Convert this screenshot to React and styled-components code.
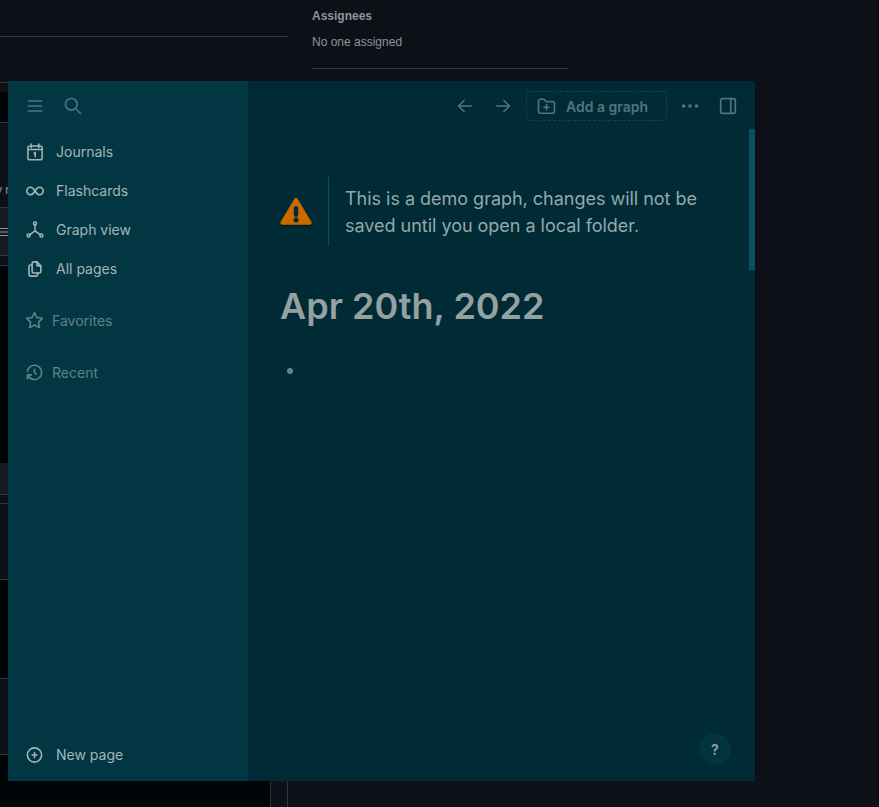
import React from "react";
import styled, { createGlobalStyle } from "styled-components";
import {
  TbMenu2,
  TbSearch,
  TbFiles,
  TbStar,
  TbHistory,
  TbCirclePlus,
  TbArrowLeft,
  TbArrowRight,
  TbDots,
  TbLayoutSidebarRight,
} from "react-icons/tb";

const GlobalStyle = createGlobalStyle`
  html, body {
    margin: 0;
    height: 100%;
    background: #0d1117;
    overflow: hidden;
  }
  body {
    font-family: Inter, "Liberation Sans", sans-serif;
  }
`;

function JournalIcon() {
  return (
    <svg width="18" height="18" viewBox="0 0 18 18" fill="none" stroke="currentColor" strokeWidth="1.5" strokeLinecap="round" strokeLinejoin="round">
      <rect x="1.9" y="2.9" width="14.2" height="13.8" rx="1.8" />
      <path d="M5.2 1v3.4M12.8 1v3.4M1.9 6.6h14.2" />
      <path d="M8.2 10.2l1-.8v4.4" />
    </svg>
  );
}

function InfinityIcon() {
  return (
    <svg width="18" height="10" viewBox="0 0 18 10" fill="none" stroke="currentColor" strokeWidth="1.6" strokeLinecap="round" strokeLinejoin="round">
      <path d="M9 5C7.6 2.8 6.4 1.2 4.6 1.2a3.8 3.8 0 0 0 0 7.6C6.4 8.8 7.6 7.2 9 5c1.4-2.2 2.6-3.8 4.4-3.8a3.8 3.8 0 0 1 0 7.6C11.6 8.8 10.4 7.2 9 5z" />
    </svg>
  );
}

function GraphIcon() {
  return (
    <svg width="18" height="18" viewBox="0 0 18 18" fill="none" stroke="currentColor" strokeWidth="1.5" strokeLinecap="round">
      <circle cx="9" cy="2.6" r="1.5" />
      <circle cx="2.6" cy="14.6" r="1.5" />
      <circle cx="15.4" cy="14.6" r="1.5" />
      <path d="M9 4.2v5.6M9 9.8l-5.2 3.9M9 9.8l5.2 3.9" />
    </svg>
  );
}

function FolderPlusIcon() {
  return (
    <svg width="19" height="17" viewBox="0 0 19 17" fill="none" stroke="currentColor" strokeWidth="1.6" strokeLinecap="round" strokeLinejoin="round">
      <path d="M1.5 3.2a2 2 0 0 1 2-2h3.4l2.3 2.4h6.3a2 2 0 0 1 2 2v7.6a2 2 0 0 1-2 2H3.5a2 2 0 0 1-2-2z" />
      <path d="M9.5 6.6v5.2M6.9 9.2h5.2" />
    </svg>
  );
}

function WarningIcon() {
  return (
    <svg width="32" height="30" viewBox="0 0 32 30">
      <path d="M16 3L29.6 25.8H2.4z" fill="#c96a00" stroke="#c96a00" strokeWidth="4" strokeLinejoin="round" />
      <rect x="13.8" y="9" width="4.4" height="11" rx="2" fill="#002b36" />
      <circle cx="16" cy="23" r="2.5" fill="#002b36" />
    </svg>
  );
}

const backdropRows = [
  { height: 37, tone: "#0d1117", line: true },
  { height: 46, tone: "#0d1117", line: true },
  { height: 9, tone: "#0d1117" },
  { height: 31, tone: "#010409", line: true },
  { height: 85, tone: "#0d1117", line: true, text: "y r" },
  { height: 48, tone: "#161b22", line: true, glyph: true },
  { height: 10, tone: "#0d1117", line: true },
  { height: 197, tone: "#010409" },
  { height: 32, tone: "#161b22", line: true },
  { height: 9, tone: "#0d1117", line: true },
  { height: 76, tone: "#0d1117", line: true },
  { height: 99, tone: "#010409", line: true },
  { height: 76, tone: "#0d1117", line: true },
];

const mainNav = [
  { label: "Journals", icon: <JournalIcon /> },
  { label: "Flashcards", icon: <InfinityIcon /> },
  { label: "Graph view", icon: <GraphIcon /> },
  { label: "All pages", icon: <TbFiles size={20} /> },
];

export default function App() {
  return (
    <>
      <GlobalStyle />
      <Backdrop>
        <LeftColumn>
          {backdropRows.map((row, i) => (
            <BackdropRow key={i} $height={row.height} $tone={row.tone} $line={row.line}>
              {row.text && <ClippedText>{row.text}</ClippedText>}
              {row.glyph && <ClippedGlyph><TbMenu2 size={14} /></ClippedGlyph>}
            </BackdropRow>
          ))}
          <BottomRail>
            <BottomPanel />
            <BottomGutter />
          </BottomRail>
        </LeftColumn>
        <RightColumn>
          <SideHeading>Assignees</SideHeading>
          <SideText>No one assigned</SideText>
          <SideRule />
        </RightColumn>
      </Backdrop>

      <DemoWindow>
        <Sidebar>
          <SidebarTop>
            <DimIcon><TbMenu2 size={20} /></DimIcon>
            <DimIcon><TbSearch size={20} /></DimIcon>
          </SidebarTop>
          <NavList>
            {mainNav.map((item) => (
              <NavItem key={item.label}>
                <NavIcon>{item.icon}</NavIcon>
                {item.label}
              </NavItem>
            ))}
          </NavList>
          <SectionItem $top={22}>
            <TbStar size={19} />
            Favorites
          </SectionItem>
          <SectionItem $top={32}>
            <TbHistory size={19} />
            Recent
          </SectionItem>
          <NewPage>
            <NavIcon><TbCirclePlus size={20} /></NavIcon>
            New page
          </NewPage>
        </Sidebar>

        <Main>
          <Toolbar>
            <ToolButton><TbArrowLeft size={22} strokeWidth={1.7} /></ToolButton>
            <ToolButton><TbArrowRight size={22} strokeWidth={1.7} /></ToolButton>
            <AddGraph>
              <FolderPlusIcon />
              Add a graph
            </AddGraph>
            <ToolButton><TbDots size={22} /></ToolButton>
            <ToolButton><TbLayoutSidebarRight size={22} strokeWidth={1.8} /></ToolButton>
          </Toolbar>
          <Scrollbar />
          <Content>
            <Notice>
              <WarningBox><WarningIcon /></WarningBox>
              <NoticeText>
                This is a demo graph, changes will not be saved until you open a local folder.
              </NoticeText>
            </Notice>
            <PageTitle>Apr 20th, 2022</PageTitle>
            <Bullet />
          </Content>
          <HelpButton>?</HelpButton>
        </Main>
      </DemoWindow>
    </>
  );
}

const Backdrop = styled.div`
  display: flex;
  height: 807px;
  overflow: hidden;
`;

const LeftColumn = styled.div`
  width: 288px;
  flex-shrink: 0;
  display: flex;
  flex-direction: column;
`;

const BackdropRow = styled.div`
  box-sizing: border-box;
  height: ${(props) => props.$height}px;
  flex-shrink: 0;
  display: flex;
  align-items: center;
  overflow: hidden;
  background: ${(props) => props.$tone};
  border-bottom: ${(props) => (props.$line ? "1px solid #30363d" : "none")};
`;

const ClippedText = styled.span`
  margin: 50px 0 0 -4px;
  font-family: "Liberation Sans", Arial, sans-serif;
  font-size: 12px;
  white-space: nowrap;
  color: #8b949e;
`;

const ClippedGlyph = styled.span`
  display: flex;
  margin: 0 0 0 -3px;
  color: #8b949e;
`;

const BottomRail = styled.div`
  flex: 1;
  display: flex;
`;

const BottomPanel = styled.div`
  width: 271px;
  box-sizing: border-box;
  background: #010409;
  border-right: 1px solid #30363d;
`;

const BottomGutter = styled.div`
  width: 17px;
  box-sizing: border-box;
  border-right: 1px solid #30363d;
`;

const RightColumn = styled.div`
  width: 256px;
  margin-left: 24px;
  padding-top: 9px;
`;

const SideHeading = styled.div`
  font-family: "Liberation Sans", Arial, sans-serif;
  font-size: 12px;
  font-weight: 700;
  line-height: 14px;
  color: #8b949e;
`;

const SideText = styled.div`
  font-family: "Liberation Sans", Arial, sans-serif;
  font-size: 12px;
  line-height: 14px;
  margin-top: 12px;
  color: #8b949e;
`;

const SideRule = styled.div`
  height: 1px;
  margin-top: 19px;
  background: #30363d;
`;

const DemoWindow = styled.div`
  position: absolute;
  left: 8px;
  top: 81px;
  width: 747px;
  height: 700px;
  display: flex;
  overflow: hidden;
`;

const Sidebar = styled.aside`
  width: 240px;
  flex-shrink: 0;
  display: flex;
  flex-direction: column;
  background: #023643;
  color: #a4b5b6;
`;

const SidebarTop = styled.div`
  height: 51px;
  padding-left: 17px;
  display: flex;
  align-items: center;
  gap: 18px;
  margin-top: -1px;
`;

const DimIcon = styled.span`
  display: flex;
  color: #4a7680;
`;

const NavList = styled.nav`
  display: flex;
  flex-direction: column;
  margin-top: 1px;
`;

const NavItem = styled.div`
  height: 39px;
  padding-left: 17px;
  display: flex;
  align-items: center;
  gap: 12px;
  font-size: 14px;
  color: #a4b5b6;
`;

const NavIcon = styled.span`
  width: 19px;
  display: flex;
  align-items: center;
  justify-content: center;
`;

const SectionItem = styled.div`
  height: 20px;
  margin-top: ${(props) => props.$top}px;
  padding-left: 17px;
  display: flex;
  align-items: center;
  gap: 8px;
  font-size: 14px;
  color: #5f8288;
`;

const NewPage = styled(NavItem)`
  margin-top: auto;
  margin-bottom: 7px;
`;

const Main = styled.main`
  position: relative;
  flex: 1;
  min-width: 0;
  background: #002b36;
  display: flex;
  flex-direction: column;
`;

const Toolbar = styled.header`
  height: 50px;
  padding-right: 8px;
  display: flex;
  align-items: center;
  justify-content: flex-end;
  color: #4f757c;
`;

const ToolButton = styled.span`
  width: 38px;
  height: 30px;
  display: flex;
  align-items: center;
  justify-content: center;
`;

const AddGraph = styled.div`
  width: 141px;
  height: 30px;
  margin: 0 4px;
  box-sizing: border-box;
  padding-left: 10px;
  display: flex;
  align-items: center;
  gap: 10px;
  border: 1px dashed #0e4552;
  border-radius: 4px;
  font-size: 14px;
  font-weight: 600;
  color: #4f757c;
`;

const Scrollbar = styled.div`
  position: absolute;
  right: 0;
  top: 48px;
  width: 6px;
  height: 141px;
  background: #0d4f60;
`;

const Content = styled.div`
  padding: 46px 0 0 32px;
  display: flex;
  flex-direction: column;
  align-items: flex-start;
`;

const Notice = styled.div`
  display: flex;
  align-items: center;
`;

const WarningBox = styled.span`
  width: 48px;
  display: flex;
  filter: drop-shadow(0 2px 1px rgba(0, 0, 0, 0.3));
`;

const NoticeText = styled.p`
  width: 372px;
  margin: 0;
  padding: 8px 0 7px 16px;
  border-left: 1px solid #0e4f5e;
  font-size: 18px;
  line-height: 27px;
  letter-spacing: -0.02px;
  color: #94a8aa;
`;

const PageTitle = styled.h1`
  margin: 38px 0 0;
  font-size: 36px;
  line-height: 44px;
  font-weight: 600;
  color: #93a1a1;
`;

const Bullet = styled.span`
  width: 6px;
  height: 6px;
  margin: 40px 0 0 7px;
  border-radius: 50%;
  background: #5d8489;
`;

const HelpButton = styled.div`
  position: absolute;
  right: 24px;
  bottom: 16px;
  width: 32px;
  height: 32px;
  border-radius: 50%;
  background: #023340;
  display: flex;
  align-items: center;
  justify-content: center;
  font-size: 14px;
  font-weight: 700;
  color: #8a9fa1;
`;
